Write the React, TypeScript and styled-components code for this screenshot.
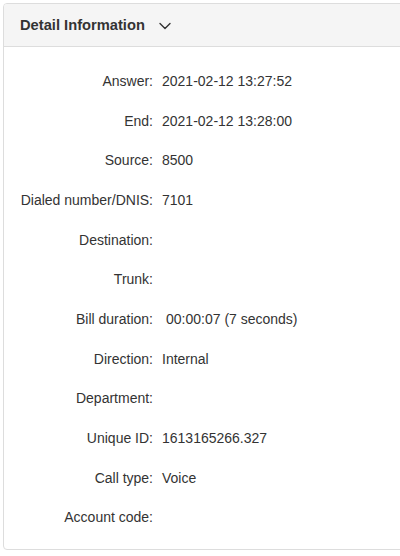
import React from "react";
import styled, { createGlobalStyle } from "styled-components";

const GlobalStyle = createGlobalStyle`
  html, body {
    margin: 0;
    padding: 0;
    background: #ffffff;
    overflow: hidden;
  }
  body {
    font-family: "Liberation Sans", Arial, sans-serif;
    color: #333333;
  }
`;

const Page = styled.div`
  padding: 3px 0 0 3px;
  width: 400px;
  height: 556px;
  box-sizing: border-box;
`;

const Panel = styled.section`
  width: 410px;
  border: 1px solid #dddddd;
  border-radius: 4px;
  background: #ffffff;
  overflow: hidden;
`;

const Header = styled.div`
  display: flex;
  align-items: center;
  gap: 14px;
  height: 42px;
  padding-left: 16px;
  background: #f5f5f5;
  border-bottom: 1px solid #dddddd;
`;

const Title = styled.h3`
  margin: 0;
  font-size: 14.7px;
  font-weight: bold;
  color: #333333;
`;

const Chevron = styled.svg`
  width: 12px;
  height: 8px;
  margin-top: 1px;
`;

const Body = styled.dl`
  display: grid;
  grid-template-columns: 149px 1fr;
  grid-auto-rows: 39.7px;
  column-gap: 9px;
  margin: 0;
  padding: 14px 0 12px 0;
  font-size: 14px;
`;

const Label = styled.dt`
  display: flex;
  align-items: center;
  justify-content: flex-end;
  white-space: nowrap;
`;

const Value = styled.dd<{ $indent?: boolean }>`
  display: flex;
  align-items: center;
  margin: 0;
  white-space: nowrap;
  padding-left: ${(p) => (p.$indent ? "4px" : "0")};
`;

const rows: { label: string; value: string; indent?: boolean }[] = [
  { label: "Answer:", value: "2021-02-12 13:27:52" },
  { label: "End:", value: "2021-02-12 13:28:00" },
  { label: "Source:", value: "8500" },
  { label: "Dialed number/DNIS:", value: "7101" },
  { label: "Destination:", value: "" },
  { label: "Trunk:", value: "" },
  { label: "Bill duration:", value: "00:00:07 (7 seconds)", indent: true },
  { label: "Direction:", value: "Internal" },
  { label: "Department:", value: "" },
  { label: "Unique ID:", value: "1613165266.327" },
  { label: "Call type:", value: "Voice" },
  { label: "Account code:", value: "" },
];

export default function App() {
  return (
    <>
      <GlobalStyle />
      <Page>
        <Panel>
          <Header>
            <Title>Detail Information</Title>
            <Chevron viewBox="0 0 12 8" fill="none">
              <path
                d="M1 1.5 L6 6.5 L11 1.5"
                stroke="#333333"
                strokeWidth="1.4"
                strokeLinecap="round"
                strokeLinejoin="round"
              />
            </Chevron>
          </Header>
          <Body>
            {rows.map((r) => (
              <React.Fragment key={r.label}>
                <Label>{r.label}</Label>
                <Value $indent={r.indent}>{r.value}</Value>
              </React.Fragment>
            ))}
          </Body>
        </Panel>
      </Page>
    </>
  );
}
